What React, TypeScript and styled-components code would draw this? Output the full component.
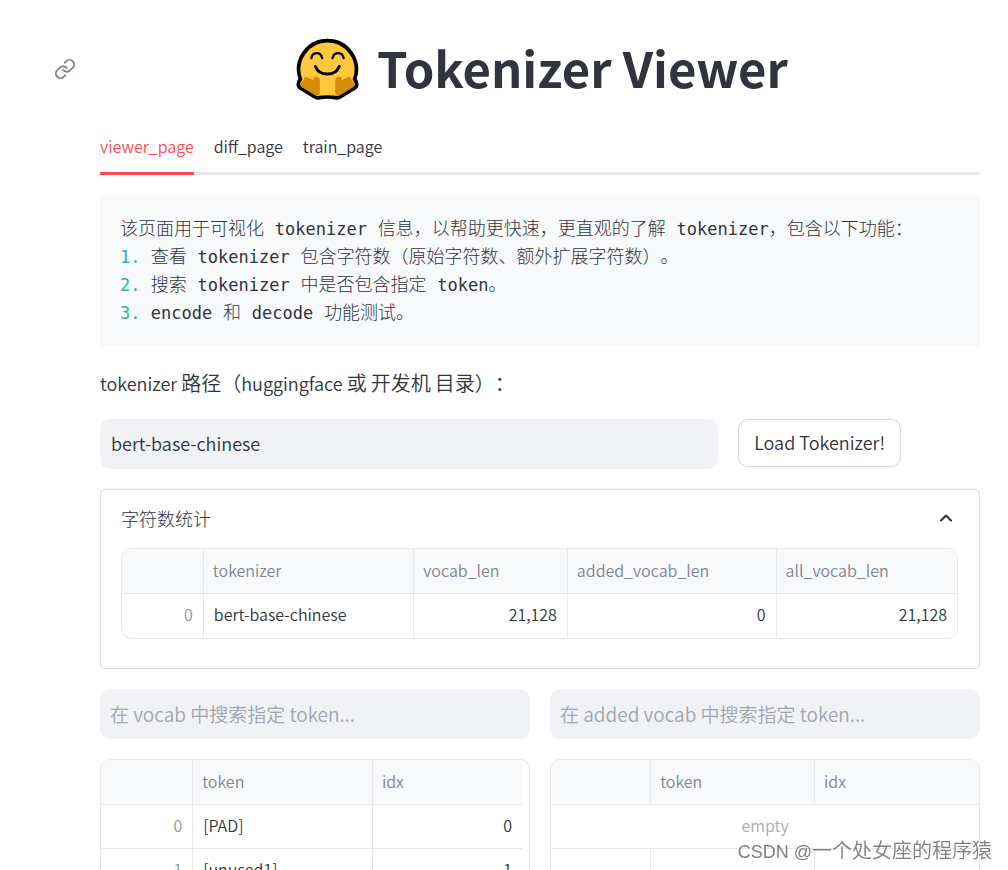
import React, { useState } from "react";
import styled, { createGlobalStyle } from "styled-components";
import { ChevronUp, Link } from "lucide-react";

const GlobalStyle = createGlobalStyle`
  *, *::before, *::after { box-sizing: border-box; }
  body {
    margin: 0;
    background: #ffffff;
    color: #31333f;
    font-family: "Noto Sans CJK SC", "Noto Sans", sans-serif;
    font-size: 18px;
    font-weight: 350;
    line-height: 28px;
    text-spacing-trim: space-all;
  }
  button, input { font: inherit; color: inherit; }
`;

const Page = styled.div`
  height: 100vh;
  overflow: hidden;
  padding: 32px 28px 0 54px;
`;

const Header = styled.header`
  display: flex;
  align-items: center;
  gap: 24px;
  height: 74px;
`;

const Anchor = styled.a`
  display: flex;
  color: #808495;
`;

const Title = styled.h1`
  flex: 1;
  display: flex;
  align-items: center;
  justify-content: center;
  gap: 18px;
  margin: 0;
  padding-left: 4px;
  font-size: 49px;
  font-weight: 700;
  line-height: 70px;
`;

const TitleText = styled.span`
  padding-bottom: 4px;
`;

const Content = styled.main`
  display: flex;
  flex-direction: column;
  gap: 20px;
  padding-left: 46px;
`;

const Tabs = styled.nav`
  display: flex;
  gap: 20px;
  height: 49px;
  margin-top: 20px;
  border-bottom: 3px solid #e9e9eb;
  font-size: 16px;
`;

const Tab = styled.button<{ $active: boolean }>`
  height: 49px;
  padding: 0 0 6px;
  border: 0;
  border-bottom: 3px solid ${(p) => (p.$active ? "#ff4b4b" : "transparent")};
  background: none;
  color: ${(p) => (p.$active ? "#ff4b4b" : "#31333f")};
  cursor: pointer;
`;

const CodeBlock = styled.pre`
  margin: 0;
  padding: 21px 20px 19px;
  border-radius: 5px;
  background: #f8f9fb;
  font-family: "Liberation Mono", "Noto Sans CJK SC", monospace;
  font-size: 18px;
  font-weight: 300;
  line-height: 28px;
`;

const CodeLatin = styled.span`
  font-family: "DejaVu Sans Mono", monospace;
  font-size: 17px;
  line-height: 20px;
`;

const CodeNumber = styled(CodeLatin)`
  color: #2bb5a0;
`;

const FieldLabel = styled.label`
  display: block;
  height: 32px;
  line-height: 32px;
`;

const Cjk = styled.span`
  font-size: 20px;
`;

const LoadRow = styled.div`
  display: grid;
  grid-template-columns: 23fr 9fr;
  gap: 20px;
  align-items: start;
`;

const TextField = styled.input`
  width: 100%;
  height: 50px;
  padding: 0 11px 2px;
  border: 0;
  border-radius: 10px;
  background: #f0f2f6;
  outline: none;
`;

const SearchField = styled(TextField)`
  padding: 0 10px 2px;
  font-size: 19px;
  &::placeholder { color: #a3a5ae; opacity: 1; }
`;

const LoadButton = styled.button`
  justify-self: start;
  height: 48px;
  padding: 0 15px 2px;
  border: 1px solid #d6d6d9;
  border-radius: 10px;
  background: #ffffff;
  white-space: nowrap;
  cursor: pointer;
`;

const Expander = styled.section`
  padding: 0 21px 29px 20px;
  border: 1px solid #d6d6d9;
  border-radius: 5px;
`;

const ExpanderHeader = styled.button`
  display: flex;
  align-items: center;
  justify-content: space-between;
  width: 100%;
  height: 58px;
  padding: 0 2px 2px 0;
  border: 0;
  background: none;
  font-weight: 300;
  cursor: pointer;
`;

const TwoColumns = styled.div`
  display: grid;
  grid-template-columns: 1fr 1fr;
  gap: 20px;
`;

const TableFrame = styled.div<{ $gutter?: boolean }>`
  overflow: hidden;
  padding-right: ${(p) => (p.$gutter ? "7px" : "0")};
  border: 1px solid #e9e9eb;
  border-radius: 10px;
`;

const Table = styled.table`
  width: 100%;
  border-collapse: separate;
  border-spacing: 0;
  table-layout: fixed;
  font-size: 16px;
  line-height: 24px;

  tbody tr:last-child td { border-bottom: 0; }
`;

const Col = styled.col<{ $share: number }>`
  width: ${(p) => p.$share}%;
`;

const HeadCell = styled.th`
  height: 45px;
  padding: 0 9px 2px;
  border-bottom: 1px solid #e6e7ea;
  border-right: 1px solid #e6e7ea;
  background: #f8f9fb;
  color: #83858d;
  font-weight: 350;
  text-align: left;
  &:last-child { border-right: 0; }
`;

const Cell = styled.td<{ $align?: "left" | "right" | "center"; $muted?: boolean }>`
  height: 44px;
  padding: 0 10px 4px;
  border-bottom: 1px solid #e9e9eb;
  border-right: 1px solid #e9e9eb;
  color: ${(p) => (p.$muted ? "#8f9198" : "#31333f")};
  text-align: ${(p) => p.$align ?? "left"};
  &:last-child { border-right: 0; }
`;

const EmptyCell = styled(Cell)`
  color: #a9abb1;
`;

const Watermark = styled.div`
  position: fixed;
  right: 16px;
  bottom: 4px;
  color: #808080;
  font-family: "Liberation Sans", "Noto Sans CJK SC", sans-serif;
  font-size: 18px;
  line-height: 28px;
`;

function HuggingFace() {
  return (
    <svg width="63" height="63" viewBox="48 39 188 188" aria-hidden="true">
      <path
        d="M61 162A86 86 0 1 1 223 162Q230 170 229 180Q227 188 217 192L181 214Q175 219 166 217Q142 213 118 217Q109 219 103 214L67 192Q57 188 55 180Q54 170 61 162Z"
        fill="#ffc83d"
        stroke="#000"
        strokeWidth="11"
        strokeLinejoin="round"
      />
      <g fill="#d68d05">
        <path d="M62 177L73 158Q77 153 83 157L100 165Q98 156 106 154Q117 153 119 165V204Q116 213 105 210L67 187Q60 184 62 177Z" />
        <path d="M222 177L211 158Q207 153 201 157L184 165Q186 156 178 154Q167 153 165 165V204Q168 213 179 210L217 187Q224 184 222 177Z" />
      </g>
      <g fill="none" stroke="#000" strokeWidth="7" strokeLinecap="round">
        <path d="M94 99C97 79 122 79 126 99" />
        <path d="M157 99C161 79 187 79 190 99" />
        <path d="M106 124C117 154 166 154 177 124" strokeWidth="9" />
      </g>
    </svg>
  );
}

const pages = ["viewer_page", "diff_page", "train_page"];

export default function App() {
  const [page, setPage] = useState(pages[0]);
  const [path, setPath] = useState("bert-base-chinese");

  return (
    <Page>
      <GlobalStyle />
      <Header>
        <Anchor href="#tokenizer-viewer" aria-label="Link to heading">
          <Link size={22} />
        </Anchor>
        <Title id="tokenizer-viewer">
          <HuggingFace />
          <TitleText>Tokenizer Viewer</TitleText>
        </Title>
      </Header>
      <Content>
        <Tabs>
          {pages.map((name) => (
            <Tab key={name} $active={name === page} onClick={() => setPage(name)}>
              {name}
            </Tab>
          ))}
        </Tabs>

        <CodeBlock>
          该页面用于可视化 <CodeLatin>tokenizer</CodeLatin> 信息，以帮助更快速，更直观的了解 <CodeLatin>tokenizer</CodeLatin>，包含以下功能：{"\n"}
          <CodeNumber>1. </CodeNumber>查看 <CodeLatin>tokenizer</CodeLatin> 包含字符数（原始字符数、额外扩展字符数）。{"\n"}
          <CodeNumber>2. </CodeNumber>搜索 <CodeLatin>tokenizer</CodeLatin> 中是否包含指定 <CodeLatin>token</CodeLatin>。{"\n"}
          <CodeNumber>3. </CodeNumber><CodeLatin>encode</CodeLatin> 和 <CodeLatin>decode</CodeLatin> 功能测试。
        </CodeBlock>

        <FieldLabel htmlFor="tokenizer-path">
          tokenizer <Cjk>路径（</Cjk>huggingface <Cjk>或</Cjk> <Cjk>开发机</Cjk> <Cjk>目录）：</Cjk>
        </FieldLabel>

        <LoadRow>
          <TextField id="tokenizer-path" value={path} onChange={(e) => setPath(e.target.value)} />
          <LoadButton>Load Tokenizer!</LoadButton>
        </LoadRow>

        <Expander>
          <ExpanderHeader aria-expanded="true">
            字符数统计
            <ChevronUp size={20} strokeWidth={2.5} />
          </ExpanderHeader>
          <TableFrame>
            <Table>
              <colgroup>
                <Col $share={9.8} />
                <Col $share={25.2} />
                <Col $share={18.4} />
                <Col $share={25} />
                <Col $share={21.6} />
              </colgroup>
              <thead>
                <tr>
                  <HeadCell />
                  <HeadCell>tokenizer</HeadCell>
                  <HeadCell>vocab_len</HeadCell>
                  <HeadCell>added_vocab_len</HeadCell>
                  <HeadCell>all_vocab_len</HeadCell>
                </tr>
              </thead>
              <tbody>
                <tr>
                  <Cell $align="right" $muted>0</Cell>
                  <Cell>bert-base-chinese</Cell>
                  <Cell $align="right">21,128</Cell>
                  <Cell $align="right">0</Cell>
                  <Cell $align="right">21,128</Cell>
                </tr>
              </tbody>
            </Table>
          </TableFrame>
        </Expander>

        <TwoColumns>
          <SearchField aria-label="vocab" placeholder="在 vocab 中搜索指定 token..." />
          <SearchField aria-label="added vocab" placeholder="在 added vocab 中搜索指定 token..." />
        </TwoColumns>

        <TwoColumns>
          <TableFrame $gutter>
            <Table>
              <colgroup>
                <Col $share={21.9} />
                <Col $share={42.7} />
                <Col $share={35.4} />
              </colgroup>
              <thead>
                <tr>
                  <HeadCell />
                  <HeadCell>token</HeadCell>
                  <HeadCell>idx</HeadCell>
                </tr>
              </thead>
              <tbody>
                {["[PAD]", "[unused1]"].map((token, idx) => (
                  <tr key={token}>
                    <Cell $align="right" $muted>{idx}</Cell>
                    <Cell>{token}</Cell>
                    <Cell $align="right">{idx}</Cell>
                  </tr>
                ))}
              </tbody>
            </Table>
          </TableFrame>
          <TableFrame>
            <Table>
              <colgroup>
                <Col $share={23.4} />
                <Col $share={38.3} />
                <Col $share={38.3} />
              </colgroup>
              <thead>
                <tr>
                  <HeadCell />
                  <HeadCell>token</HeadCell>
                  <HeadCell>idx</HeadCell>
                </tr>
              </thead>
              <tbody>
                <tr>
                  <EmptyCell colSpan={3} $align="center">empty</EmptyCell>
                </tr>
                <tr>
                  <Cell />
                  <Cell />
                  <Cell />
                </tr>
              </tbody>
            </Table>
          </TableFrame>
        </TwoColumns>
      </Content>
      <Watermark>
        CSDN @<Cjk>一个处女座的程序猿</Cjk>
      </Watermark>
    </Page>
  );
}
